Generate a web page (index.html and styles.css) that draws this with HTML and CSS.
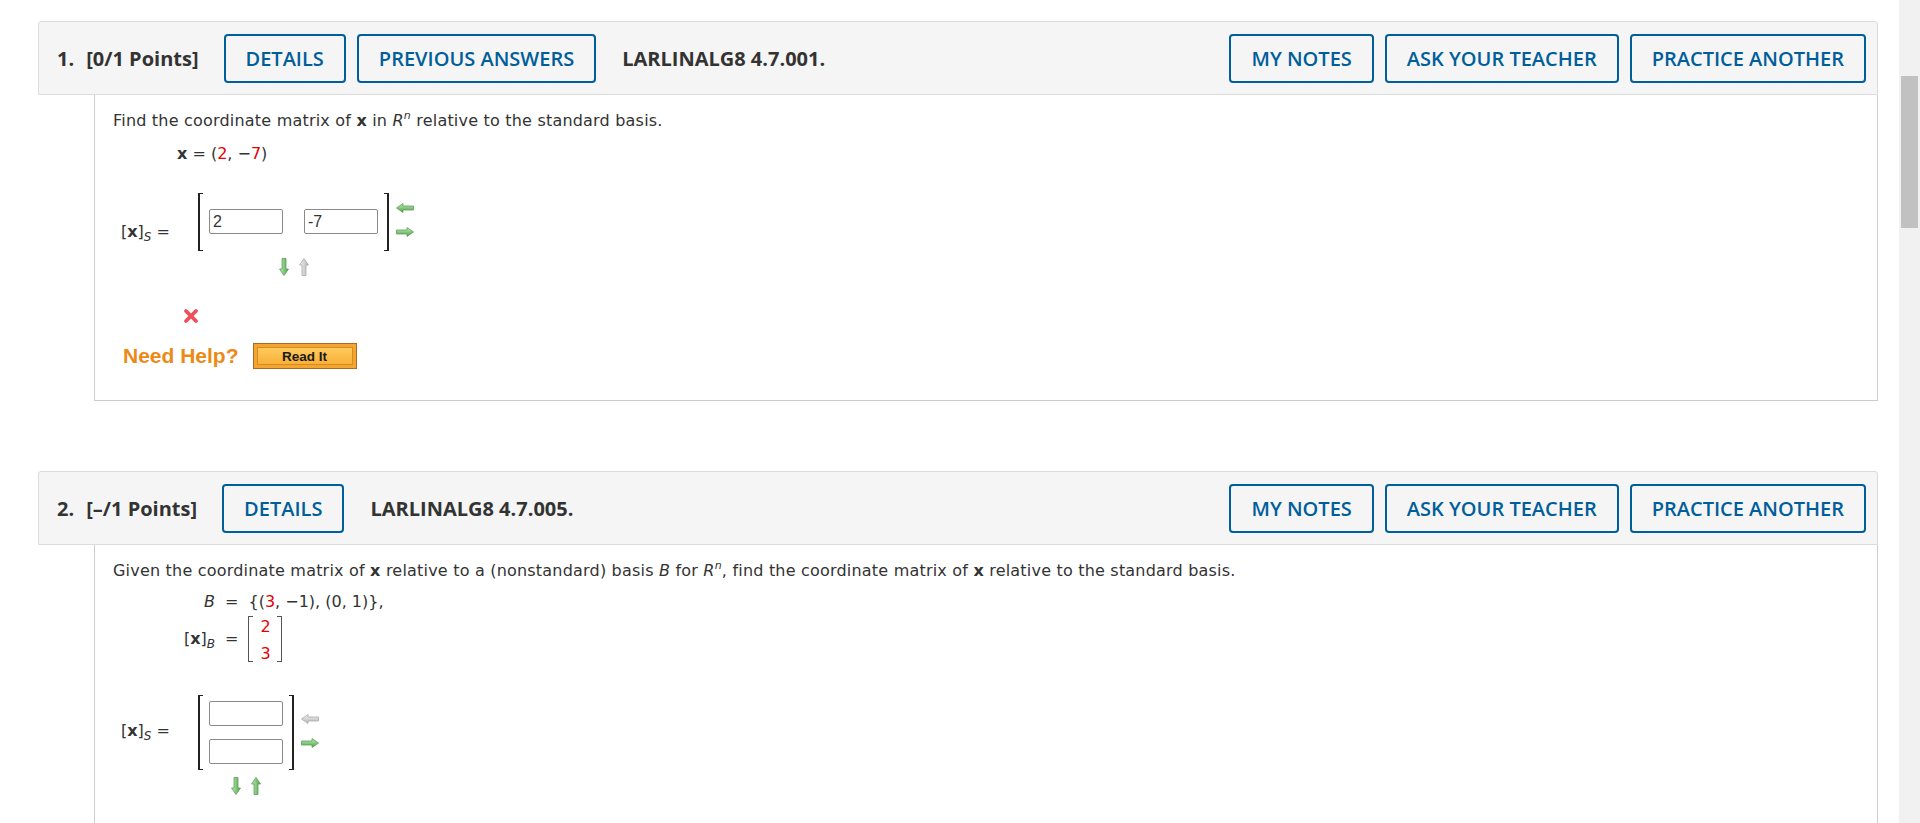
FILE: index.html
```html
<!DOCTYPE html>
<html lang="en">
<head>
<meta charset="utf-8">
<title>Questions</title>
<link rel="stylesheet" href="styles.css">
</head>
<body>
<svg class="defs" width="0" height="0" aria-hidden="true">
  <defs>
    <linearGradient id="gh" x1="0" y1="0" x2="0" y2="1">
      <stop offset="0" stop-color="#c3e8bd"/>
      <stop offset="0.5" stop-color="#86c97f"/>
      <stop offset="1" stop-color="#4c9a48"/>
    </linearGradient>
    <linearGradient id="gv" x1="0" y1="0" x2="1" y2="0">
      <stop offset="0" stop-color="#c3e8bd"/>
      <stop offset="0.5" stop-color="#86c97f"/>
      <stop offset="1" stop-color="#4c9a48"/>
    </linearGradient>
    <linearGradient id="ghg" x1="0" y1="0" x2="0" y2="1">
      <stop offset="0" stop-color="#f2f2f2"/>
      <stop offset="1" stop-color="#b4b4b4"/>
    </linearGradient>
    <linearGradient id="gvg" x1="0" y1="0" x2="1" y2="0">
      <stop offset="0" stop-color="#f2f2f2"/>
      <stop offset="1" stop-color="#b4b4b4"/>
    </linearGradient>
  </defs>
</svg>
<div class="page">
  <main class="content">

    <section class="q q1">
      <header class="qhead">
        <span class="qnum"><span class="qn">1.</span>[0/1 Points]</span>
        <button class="qbtn">DETAILS</button>
        <button class="qbtn">PREVIOUS ANSWERS</button>
        <span class="qcode">LARLINALG8 4.7.001.</span>
        <span class="spacer"></span>
        <button class="qbtn">MY NOTES</button>
        <button class="qbtn">ASK YOUR TEACHER</button>
        <button class="qbtn">PRACTICE ANOTHER</button>
      </header>
      <div class="qbody">
        <p class="prompt">Find the coordinate matrix of <b>x</b> in <i>R</i><sup><i>n</i></sup> relative to the standard basis.</p>
        <p class="given"><b>x</b> = (<span class="red">2</span>, −<span class="red">7</span>)</p>
        <div class="answer a1">
          <span class="lbl">[<b>x</b>]<sub>S</sub> =</span>
          <div class="mwrap">
            <div class="matrix">
              <span class="br bl"></span>
              <div class="cells cells-row">
                <input class="cell" type="text" value="2">
                <input class="cell" type="text" value="-7">
              </div>
              <span class="br brr"></span>
            </div>
            <div class="harrows">
              <svg width="18" height="10" viewBox="0 0 18 10"><path d="M17.5 3 H7 V0.5 L0.5 5 L7 9.5 V7 H17.5 Z" fill="url(#gh)" stroke="#5d9e58" stroke-width="0.8"/></svg>
              <svg width="18" height="10" viewBox="0 0 18 10"><path d="M0.5 3 H11 V0.5 L17.5 5 L11 9.5 V7 H0.5 Z" fill="url(#gh)" stroke="#5d9e58" stroke-width="0.8"/></svg>
            </div>
            <div class="varrows">
              <svg width="10" height="18" viewBox="0 0 10 18"><path d="M3 0.5 V11 H0.5 L5 17.5 L9.5 11 H7 V0.5 Z" fill="url(#gv)" stroke="#5d9e58" stroke-width="0.8"/></svg>
              <svg width="10" height="18" viewBox="0 0 10 18"><path d="M3 17.5 V7 H0.5 L5 0.5 L9.5 7 H7 V17.5 Z" fill="url(#gvg)" stroke="#aaaaaa" stroke-width="0.8"/></svg>
            </div>
          </div>
        </div>
        <div class="wrong">
          <svg width="16" height="16" viewBox="0 0 16 16"><path d="M3 3 L13 13 M13 3 L3 13" stroke="#ef4f5a" stroke-width="3.8" stroke-linecap="round"/></svg>
        </div>
        <div class="help">
          <span class="needhelp">Need Help?</span>
          <button class="readit"><span>Read It</span></button>
        </div>
      </div>
    </section>

    <section class="q q2">
      <header class="qhead">
        <span class="qnum"><span class="qn">2.</span>[–/1 Points]</span>
        <button class="qbtn">DETAILS</button>
        <span class="qcode">LARLINALG8 4.7.005.</span>
        <span class="spacer"></span>
        <button class="qbtn">MY NOTES</button>
        <button class="qbtn">ASK YOUR TEACHER</button>
        <button class="qbtn">PRACTICE ANOTHER</button>
      </header>
      <div class="qbody qbody-open">
        <p class="prompt">Given the coordinate matrix of <b>x</b> relative to a (nonstandard) basis <i>B</i> for <i>R</i><sup><i>n</i></sup>, find the coordinate matrix of <b>x</b> relative to the standard basis.</p>
        <div class="eqs">
          <span class="eq-l"><i>B</i></span><span class="eq-m">=</span><span class="eq-r">{(<span class="red">3</span>, −1), (0, 1)},</span>
          <span class="eq-l">[<b>x</b>]<sub>B</sub></span><span class="eq-m">=</span>
          <span class="eq-r">
            <span class="smat">
              <span class="sbr sbl"></span>
              <span class="scol"><span class="red">2</span><span class="red">3</span></span>
              <span class="sbr sbrr"></span>
            </span>
          </span>
        </div>
        <div class="answer a2">
          <span class="lbl">[<b>x</b>]<sub>S</sub> =</span>
          <div class="mwrap">
            <div class="matrix">
              <span class="br bl"></span>
              <div class="cells cells-col">
                <input class="cell" type="text" value="">
                <input class="cell" type="text" value="">
              </div>
              <span class="br brr"></span>
            </div>
            <div class="harrows">
              <svg width="18" height="10" viewBox="0 0 18 10"><path d="M17.5 3 H7 V0.5 L0.5 5 L7 9.5 V7 H17.5 Z" fill="url(#ghg)" stroke="#aaaaaa" stroke-width="0.8"/></svg>
              <svg width="18" height="10" viewBox="0 0 18 10"><path d="M0.5 3 H11 V0.5 L17.5 5 L11 9.5 V7 H0.5 Z" fill="url(#gh)" stroke="#5d9e58" stroke-width="0.8"/></svg>
            </div>
            <div class="varrows">
              <svg width="10" height="18" viewBox="0 0 10 18"><path d="M3 0.5 V11 H0.5 L5 17.5 L9.5 11 H7 V0.5 Z" fill="url(#gv)" stroke="#5d9e58" stroke-width="0.8"/></svg>
              <svg width="10" height="18" viewBox="0 0 10 18"><path d="M3 17.5 V7 H0.5 L5 0.5 L9.5 7 H7 V17.5 Z" fill="url(#gv)" stroke="#5d9e58" stroke-width="0.8"/></svg>
            </div>
          </div>
        </div>
      </div>
    </section>

  </main>
  <div class="scrollbar"><div class="thumb"></div></div>
</div>
</body>
</html>
```

FILE: styles.css
```css
* { box-sizing: border-box; }

html, body {
  margin: 0;
  height: 100%;
}

body {
  background: #fff;
  overflow: hidden;
  font-family: "DejaVu Sans", Verdana, sans-serif;
  color: #333;
}

.defs {
  display: block;
  width: 0;
  height: 0;
  overflow: hidden;
}

.page {
  display: flex;
  height: 823px;
}

.content {
  flex: 1;
  min-width: 0;
  padding: 21px 21px 0 38px;
}

.scrollbar {
  width: 21px;
  background: #f1f1f1;
  padding: 76px 2px 0;
}

.thumb {
  height: 152px;
  background: #c1c1c1;
}

/* ---------- question card ---------- */
.q { margin-bottom: 70px; }

.qhead {
  display: flex;
  align-items: center;
  height: 74px;
  padding: 0 11px 0 18px;
  background: #f5f5f5;
  border: 1px solid #dcdcdc;
  border-radius: 3px 3px 0 0;
  font-family: "Open Sans", "Liberation Sans", sans-serif;
  color: #333;
}

.qnum {
  font-size: 20px;
  font-weight: 700;
  margin-right: 25px;
}

.qn { margin-right: 12px; }

.qbtn {
  font-family: inherit;
  font-size: 20px;
  font-weight: 600;
  color: #005e9b;
  background: transparent;
  border: 2px solid #005e9b;
  border-radius: 4px;
  height: 49px;
  padding: 0 20px;
  margin-right: 11px;
  cursor: pointer;
}

.qbtn:last-child { margin-right: 0; }

.qcode {
  font-size: 20px;
  font-weight: 700;
  margin-left: 15px;
}

.spacer { flex: 1; }

.qbody {
  margin-left: 56px;
  border: 1px solid #cccccc;
  border-top: none;
  padding: 16px 18px 31px 18px;
  font-size: 16px;
  line-height: 20px;
}

.qbody-open {
  border-bottom: none;
  height: 290px;
}

.prompt {
  margin: 0;
  letter-spacing: 0.2px;
}
.q1 .prompt { margin-bottom: 13px; }
.q2 .prompt { margin-bottom: 11px; }

sup {
  font-size: 11px;
  vertical-align: 7px;
  line-height: 0;
}

sub {
  font-size: 12px;
  font-style: italic;
  vertical-align: -4px;
  line-height: 0;
}

.red { color: #e60000; }

.given {
  margin: 0 0 29px 64px;
}

/* ---------- answer matrix ---------- */
.answer {
  display: flex;
  align-items: flex-start;
  margin-left: 8px;
}

.lbl {
  width: 77px;
  flex: none;
  white-space: nowrap;
}

.a1 .lbl { margin-top: 29px; }
.a2 .lbl { margin-top: 25.5px; }

.mwrap {
  display: grid;
  grid-template-columns: auto auto;
  align-items: center;
}

.matrix {
  display: flex;
  align-items: stretch;
}

.br {
  width: 5px;
  border-top: 1.5px solid #222;
  border-bottom: 1.5px solid #222;
}

.bl { border-left: 2px solid #222; }
.brr { border-right: 2px solid #222; }

.cells {
  display: flex;
  padding: 0 6px;
}

.cells-row {
  gap: 21px;
  padding-top: 16px;
  padding-bottom: 17px;
}

.cells-col {
  flex-direction: column;
  gap: 13px;
  padding-top: 6px;
  padding-bottom: 6px;
}

.cell {
  width: 74px;
  height: 25px;
  border: 1px solid #8a8a8a;
  border-radius: 2px;
  padding: 0 3px;
  font-family: "Liberation Sans", Arial, sans-serif;
  font-size: 16px;
  color: #333;
  background: #fff;
}

.harrows {
  display: flex;
  flex-direction: column;
  gap: 14px;
  margin-left: 7px;
  margin-bottom: 4px;
}

.harrows svg, .varrows svg { display: block; }

.varrows {
  display: flex;
  justify-content: center;
  gap: 10px;
  margin-top: 7px;
}

/* ---------- feedback / help ---------- */
.wrong {
  margin: 32px 0 0 70px;
  height: 16px;
}

.wrong svg { display: block; }

.help {
  display: flex;
  align-items: center;
  margin: 19px 0 0 10px;
}

.needhelp {
  font-family: "Liberation Sans", Arial, sans-serif;
  font-weight: 700;
  font-size: 21px;
  color: #ec8a17;
  margin-right: 14px;
}

.readit {
  width: 104px;
  height: 26px;
  padding: 3px;
  border: 1px solid #a86c28;
  background: #f6a52c;
  border-radius: 0;
  display: flex;
  cursor: pointer;
}

.readit span {
  flex: 1;
  display: flex;
  align-items: center;
  justify-content: center;
  border: 1px solid #d28c2e;
  background: linear-gradient(#ffca5c, #f8b139);
  font-family: "Liberation Sans", Arial, sans-serif;
  font-weight: 700;
  font-size: 13.5px;
  color: #1a1a1a;
}

/* ---------- given equations (q2) ---------- */
.eqs {
  display: grid;
  grid-template-columns: auto auto auto;
  justify-content: start;
  align-items: center;
  column-gap: 10px;
  row-gap: 4px;
  margin-left: 71px;
}

.eq-l { text-align: right; }

.smat {
  display: inline-flex;
  height: 46px;
  vertical-align: middle;
}

.sbr {
  width: 5px;
  border-top: 1.5px solid #555;
  border-bottom: 1.5px solid #555;
}

.sbl { border-left: 1.5px solid #555; }
.sbrr { border-right: 1.5px solid #555; }

.scol {
  display: flex;
  flex-direction: column;
  align-items: center;
  width: 24px;
  padding-top: 2px;
  gap: 9px;
  line-height: 18px;
}

.q2 .answer { margin-top: 33px; }
```
